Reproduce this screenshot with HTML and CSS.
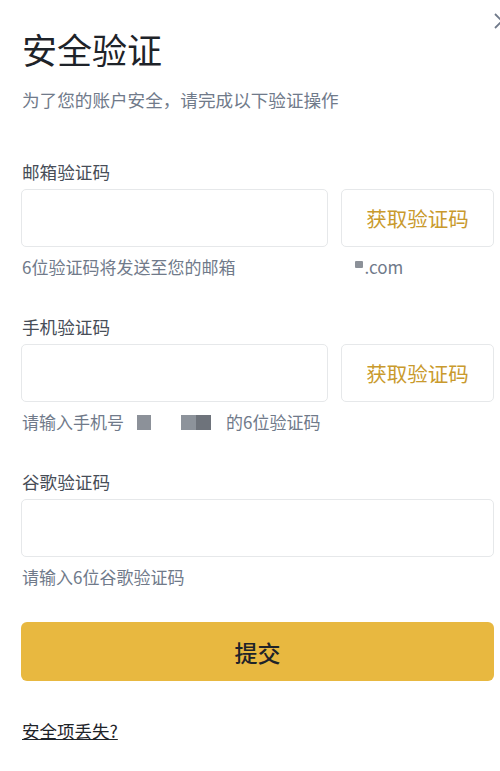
FILE: index.html
```html
<!DOCTYPE html>
<html lang="zh-CN">
  <head>
    <meta charset="UTF-8" />
    <meta name="viewport" content="width=device-width, initial-scale=1.0" />
    <title>安全验证</title>
    <link rel="stylesheet" href="styles.css">
  </head>
  <body>
    <div class="dialog">
      <a class="close" aria-label="关闭">
        <svg width="16" height="16" viewBox="0 0 16 16">
          <path d="M1 1 L15 15 M15 1 L1 15" stroke="#707a8a" stroke-width="1.8" fill="none" />
        </svg>
      </a>
      <h1 class="title">安全验证</h1>
      <p class="subtitle">为了您的账户安全，请完成以下验证操作</p>

      <div class="fields">
        <div class="field">
          <label for="emailCode">邮箱验证码</label>
          <div class="row">
            <input id="emailCode" type="text" />
            <button type="button" class="send">获取验证码</button>
          </div>
          <div class="hint hint-split">
            <span>6位验证码将发送至您的邮箱</span>
            <span class="mail"><i class="mask mask-sm"></i>.com</span>
          </div>
        </div>

        <div class="field">
          <label for="phoneCode">手机验证码</label>
          <div class="row">
            <input id="phoneCode" type="text" />
            <button type="button" class="send">获取验证码</button>
          </div>
          <div class="hint">
            请输入手机号<i class="mask mask-a"></i><i class="mask mask-b"></i><i class="mask mask-c"></i>的6位验证码
          </div>
        </div>

        <div class="field">
          <label for="googleCode">谷歌验证码</label>
          <div class="row">
            <input id="googleCode" type="text" />
          </div>
          <div class="hint">请输入6位谷歌验证码</div>
        </div>
      </div>

      <button type="submit" class="submit">提交</button>
      <a class="lost">安全项丢失?</a>
    </div>
  </body>
</html>
```

FILE: styles.css
```css
body {
  margin: 0;
  width: 500px;
  height: 771px;
  overflow: hidden;
  background-color: #ffffff;
  font-family: "Noto Sans CJK SC", "Noto Sans", sans-serif;
  color: #1e2329;
}
.dialog {
  position: relative;
  display: flex;
  flex-direction: column;
  padding: 27px 6px 0 21px;
}
.close {
  position: absolute;
  top: 10px;
  left: 494px;
  cursor: pointer;
}
.title {
  margin: 0 0 0 1px;
  font-size: 35px;
  line-height: 44px;
  font-weight: 400;
  color: #1e2329;
}
.subtitle {
  margin: 17px 0 0 1px;
  font-size: 17.6px;
  line-height: 24px;
  color: #707a8a;
}
.fields {
  display: flex;
  flex-direction: column;
  gap: 36px;
  margin-top: 48px;
}
.field {
  display: flex;
  flex-direction: column;
}
label {
  margin-left: 1px;
  font-size: 17.6px;
  line-height: 24px;
  color: #474d57;
}
.row {
  display: flex;
  gap: 13px;
  margin-top: 5px;
}
input {
  flex: 1;
  height: 58px;
  box-sizing: border-box;
  border: 1px solid #e6e8ea;
  border-radius: 5px;
  padding: 0 14px;
  font-size: 17px;
  outline: none;
}
.send {
  width: 153px;
  height: 58px;
  border: 1px solid #e6e8ea;
  border-radius: 5px;
  background-color: #ffffff;
  color: #c99a2d;
  font-family: inherit;
  font-size: 20.5px;
  cursor: pointer;
}
.hint {
  margin: 8px 0 0 1px;
  font-size: 17px;
  line-height: 24px;
  color: #707a8a;
  display: flex;
  align-items: center;
}
.hint-split .mail {
  margin-left: 120px;
  display: flex;
  align-items: center;
  color: #707a8a;
}
.mask {
  display: inline-block;
  background-color: #8c9199;
}
.mask-sm {
  width: 8px;
  height: 7px;
  margin-right: 1px;
  margin-bottom: 6px;
  border-radius: 1px;
}
.mask-a {
  width: 14px;
  height: 15px;
  margin: 0 30px 0 13px;
}
.mask-b {
  width: 15px;
  height: 15px;
  background-color: #8d939b;
}
.mask-c {
  width: 15px;
  height: 15px;
  margin-right: 15px;
  background-color: #6e737b;
}
.submit {
  margin-top: 33px;
  height: 59px;
  border: none;
  border-radius: 6px;
  background-color: #e8b840;
  color: #1e2329;
  font-family: inherit;
  font-size: 23px;
  font-weight: 500;
  cursor: pointer;
}
.lost {
  align-self: flex-start;
  margin: 38px 0 0 1px;
  font-size: 17.5px;
  line-height: 24px;
  color: #1e2329;
  text-decoration: underline;
  cursor: pointer;
}
```
